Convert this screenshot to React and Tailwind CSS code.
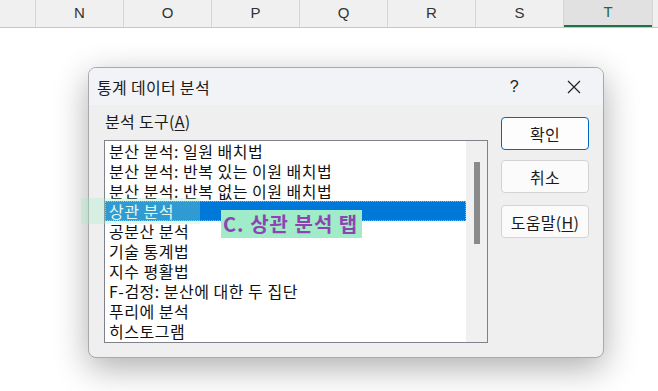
import React from "react";

const cols = ["N", "O", "P", "Q", "R", "S"];
const items = [
  "분산 분석: 일원 배치법",
  "분산 분석: 반복 있는 이원 배치법",
  "분산 분석: 반복 없는 이원 배치법",
  "상관 분석",
  "공분산 분석",
  "기술 통계법",
  "지수 평활법",
  "F-검정: 분산에 대한 두 집단",
  "푸리에 분석",
  "히스토그램",
];

const kr = { fontFamily: '"Noto Sans CJK KR", "Noto Sans", sans-serif' };

export default function App() {
  return (
    <div className="relative w-[658px] h-[391px] bg-white overflow-hidden" style={kr}>
      {/* column header */}
      <div className="flex h-[28px] bg-[#f0f0f0] border-b border-[#c6c6c6] text-[15px] text-[#333]" style={{ fontFamily: '"Liberation Sans", Arial, sans-serif' }}>
        <div className="w-[36px] shrink-0 border-r border-[#d6d6d6]" />
        {cols.map((c) => (
          <div key={c} className="w-[88px] shrink-0 border-r border-[#d6d6d6] flex items-center justify-center">
            {c}
          </div>
        ))}
        <div className="w-[88px] shrink-0 bg-[#e1e1e1] border-b-2 border-[#217346] flex items-center justify-center text-[#1e6b40]">
          T
        </div>
        <div className="flex-1 border-l border-[#d6d6d6]" />
      </div>

      {/* dialog */}
      <div className="absolute left-[88px] top-[67px] w-[516px] h-[291px] rounded-[8px] border border-[#a8a8ad] bg-[#efefef] shadow-[0_10px_34px_rgba(0,0,0,0.32)] overflow-hidden">
        <div className="h-[37px] bg-[#f2f3f7] flex items-center pl-[8px] text-[16px] tracking-[0.3px] text-[#1a1a1a]">
          <span>통계 데이터 분석</span>
          <span className="ml-auto mr-[48px] text-[16px] text-[#222]" style={{ fontFamily: '"Liberation Sans", sans-serif' }}>?</span>
          <svg width="14" height="14" viewBox="0 0 14 14" className="mr-[22px]">
            <path d="M1 1 L13 13 M13 1 L1 13" stroke="#222" strokeWidth="1.2" />
          </svg>
        </div>
        <div className="flex pl-[15px] pr-[14px]">
          <div className="flex flex-col">
            <div className="mt-[6px] h-[20px] leading-[20px] text-[16px] tracking-[0.3px] text-[#1a1a1a] pl-[1px]">
              분석 도구(<span className="underline underline-offset-2">A</span>)
            </div>
            <div className="mt-[9px] w-[384px] h-[203px] border border-[#7f828a] bg-white flex">
              <div className="flex-1 flex flex-col">
                {items.map((t, i) =>
                  i === 3 ? (
                    <div key={t} className="h-[20px] leading-[18px] pl-[3px] text-[16px] tracking-[0.5px] text-white bg-[#0078d7] border border-dotted border-[#f0a040] whitespace-nowrap">
                      {t}
                    </div>
                  ) : (
                    <div key={t} className="h-[20px] leading-[20px] pl-[4px] text-[16px] tracking-[0.5px] text-[#111] whitespace-nowrap">
                      {t}
                    </div>
                  )
                )}
              </div>
              <div className="w-[21px] bg-[#f0f0f0] flex justify-center">
                <div className="mt-[21px] ml-[1px] w-[6px] h-[82px] bg-[#8a8a8a]" />
              </div>
            </div>
          </div>
          <div className="ml-[13px] mt-[12px] flex flex-col">
            <div className="w-[88px] h-[33px] rounded-[4px] border border-[#0067c0] bg-[#fdfdfd] flex items-center justify-center text-[16px] tracking-[0.3px] text-[#1a1a1a]">
              확인
            </div>
            <div className="mt-[10px] w-[88px] h-[33px] rounded-[4px] border border-[#d3d3d3] bg-[#fbfbfb] flex items-center justify-center text-[16px] tracking-[0.3px] text-[#1a1a1a]">
              취소
            </div>
            <div className="mt-[12px] w-[88px] h-[33px] rounded-[4px] border border-[#d3d3d3] bg-[#fbfbfb] flex items-center justify-center text-[16px] tracking-[0.3px] text-[#1a1a1a]">
              도움말(<span className="underline underline-offset-2">H</span>)
            </div>
          </div>
        </div>
      </div>

      {/* annotation overlays */}
      <div className="absolute left-[81px] top-[198px] w-[119px] h-[26px] bg-[rgba(160,235,200,0.3)]" />
      <div className="absolute left-[221px] top-[210px] w-[141px] h-[28px] bg-[#a0ecc8] flex items-center pl-[2px] text-[20px] font-bold tracking-[1px] text-[#8e44b0] whitespace-nowrap">
        C. 상관 분석 탭
      </div>
    </div>
  );
}
